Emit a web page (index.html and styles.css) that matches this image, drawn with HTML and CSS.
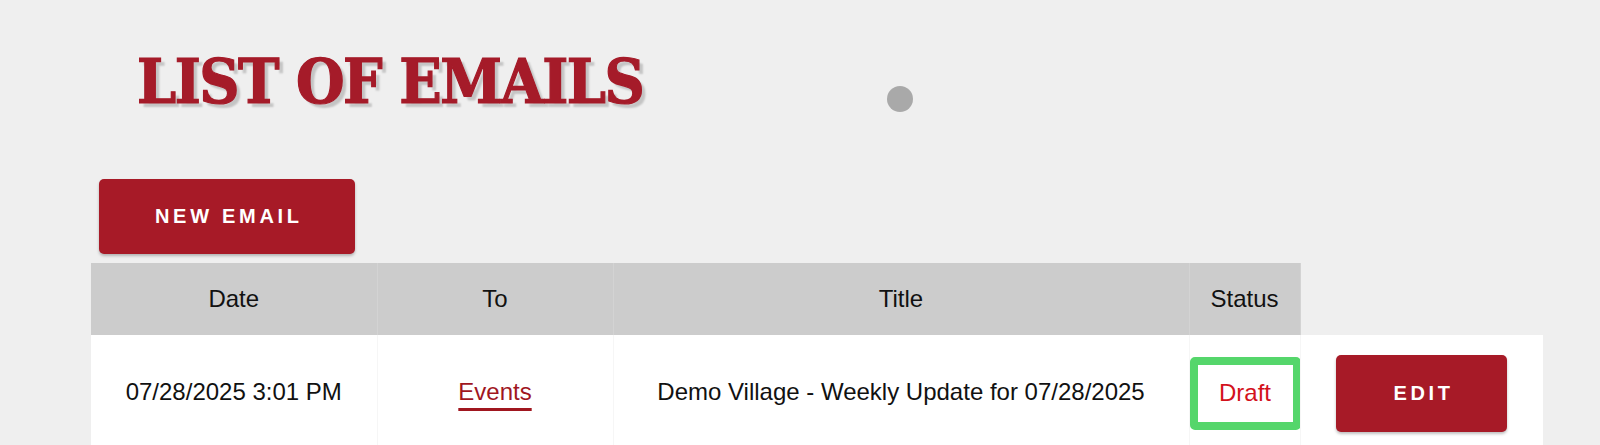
FILE: index.html
```html
<!DOCTYPE html>
<html lang="en">
<head>
<meta charset="utf-8">
<title>List of Emails</title>
<link rel="stylesheet" href="styles.css">
</head>
<body>
<main class="page">
  <header class="page-head">
    <h1 class="title">LIST OF EMAILS</h1>
    <span class="spinner" aria-hidden="true"></span>
  </header>
  <div class="toolbar">
    <button class="btn btn-new" type="button">NEW EMAIL</button>
  </div>
  <table class="emails">
    <colgroup>
      <col class="c-date"><col class="c-to"><col class="c-title"><col class="c-status"><col class="c-action">
    </colgroup>
    <thead>
      <tr>
        <th>Date</th>
        <th>To</th>
        <th>Title</th>
        <th>Status</th>
        <th class="th-empty"></th>
      </tr>
    </thead>
    <tbody>
      <tr>
        <td>07/28/2025 3:01 PM</td>
        <td><a class="to-link" href="#">Events</a></td>
        <td>Demo Village - Weekly Update for 07/28/2025</td>
        <td class="td-status"><span class="status-draft">Draft</span></td>
        <td><button class="btn btn-edit" type="button">EDIT</button></td>
      </tr>
    </tbody>
  </table>
</main>
</body>
</html>
```
FILE: styles.css
```css
html, body {
  margin: 0;
  padding: 0;
}
body {
  background: #efefef;
  font-family: "Liberation Sans", Arial, sans-serif;
  color: #111;
  overflow: hidden;
}
.page {
  padding-left: 91px;
  width: 1452px;
}
.page-head {
  position: relative;
  padding-top: 51px;
}
.title {
  margin: 0 0 0 46px;
  font-family: "DejaVu Serif Condensed", "DejaVu Serif", serif;
  font-weight: bold;
  font-size: 62px;
  line-height: 62px;
  letter-spacing: -1.5px;
  color: #a51b29;
  -webkit-text-stroke: 1.2px #a51b29;
  text-shadow: 4px 4px 2px rgba(0, 0, 0, 0.18);
  white-space: nowrap;
}
.spinner {
  position: absolute;
  left: 796px;
  top: 86px;
  width: 26px;
  height: 26px;
  border-radius: 50%;
  background: #a9a9a9;
}
.toolbar {
  margin-top: 66px;
  padding-left: 8px;
}
.btn {
  border: 0;
  border-radius: 5px;
  background: #a71a27;
  color: #fff;
  font-family: "Liberation Sans", Arial, sans-serif;
  font-weight: bold;
  font-size: 20px;
  letter-spacing: 3.7px;
  text-indent: 3.7px;
  box-shadow: 0 2px 3px rgba(0, 0, 0, 0.25);
  cursor: pointer;
}
.btn-new {
  display: block;
  width: 256px;
  height: 75px;
}
.emails {
  margin-top: 9px;
  border-collapse: collapse;
  width: 1452px;
  table-layout: fixed;
}
.c-date { width: 286px; }
.c-to { width: 236px; }
.c-title { width: 576px; }
.c-status { width: 111px; }
.c-action { width: 243px; }
.emails th {
  height: 72px;
  padding: 0;
  background: #cccccc;
  font-weight: normal;
  font-size: 24px;
  color: #111;
  text-align: center;
  border-right: 1px solid #d3d3d3;
}
.emails th.th-empty {
  background: transparent;
  border-right: 0;
}
.emails td {
  height: 114px;
  padding: 0;
  background: #fff;
  font-size: 24px;
  text-align: center;
  vertical-align: middle;
  border-right: 1px solid #f6f6f6;
}
.emails td:last-child {
  border-right: 0;
}
.to-link {
  color: #a0161f;
  text-decoration: underline;
  text-decoration-thickness: 3px;
  text-underline-offset: 8px;
}
.td-status {
  padding: 0;
}
.status-draft {
  display: flex;
  align-items: center;
  justify-content: center;
  box-sizing: border-box;
  width: 111px;
  height: 73px;
  margin-top: 2px;
  border: 8px solid #55d66b;
  border-radius: 5px;
  color: #d3111c;
}
.btn-edit {
  width: 171px;
  height: 77px;
  margin-top: 3px;
}
```
